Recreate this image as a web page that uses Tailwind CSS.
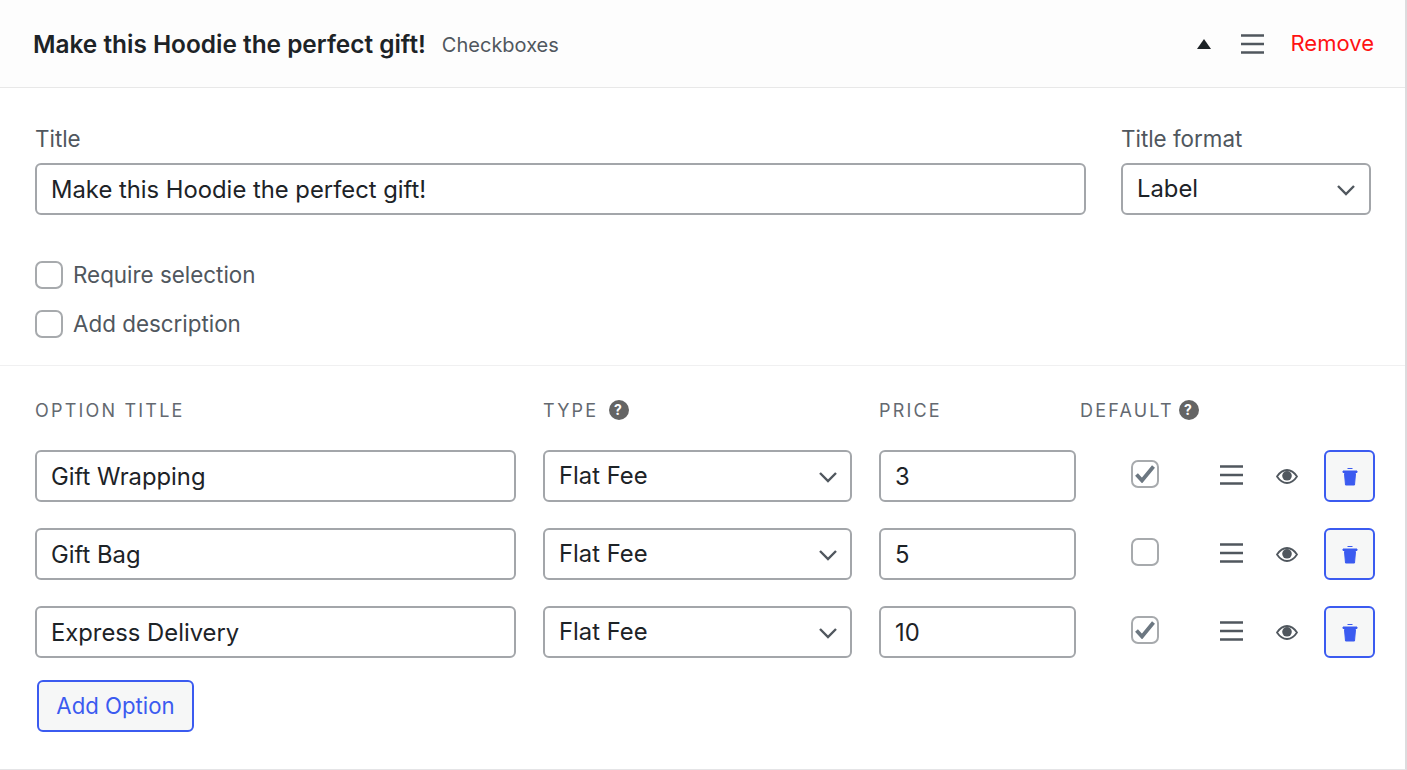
<!DOCTYPE html>
<html lang="en">
<head>
    <meta charset="UTF-8">
    <title>Checkboxes add-on</title>
    <script src="https://cdn.jsdelivr.net/npm/@tailwindcss/browser@4"></script>
</head>
<body class="bg-white font-['Inter',sans-serif] text-[#50575e] overflow-hidden">
    <div class="w-[1407px] h-[770px] border-r-2 border-r-[#dcdcde] border-b border-b-[#e4e4e6] overflow-hidden">

        <!-- header -->
        <div class="h-[88px] bg-[#fdfdfd] border-b border-[#e8e8e8] pl-[33px] pr-[31px] flex items-center">
            <span class="pt-[1px] text-[24.4px] font-semibold text-[#1d2327]">Make this Hoodie the perfect gift!</span>
            <span class="ml-[16px] pt-[3px] text-[20px] text-[#50575e]">Checkboxes</span>
            <svg class="ml-auto" width="16" height="12" viewBox="0 0 16 12"><path d="M8 1 15 11H1z" fill="#1d2327"/></svg>
            <svg class="ml-[29px]" width="24" height="20" viewBox="0 0 24 20"><path d="M0 1.500h23M0 10h23M0 18.500h23" stroke="#50575e" stroke-width="2.500"/></svg>
            <span class="ml-[26px] text-[22px] text-[#ff1212]">Remove</span>
        </div>

        <!-- title + format -->
        <div class="pl-[35px] pr-[34px] pt-[36px] flex gap-[35px]">
            <div class="w-[1051px]">
                <label class="block text-[22.4px] leading-[30px] text-[#50575e] mb-[9px]">Title</label>
                <input class="w-full h-[52px] px-[14px] bg-white border-2 border-[#a3a6aa] rounded-[6px] text-[23.8px] text-[#1d2327]" value="Make this Hoodie the perfect gift!">
            </div>
            <div class="w-[250px]">
                <label class="block text-[22.4px] leading-[30px] text-[#50575e] mb-[9px]">Title format</label>
                <div class="relative">
                    <select class="appearance-none w-full h-[52px] px-[14px] bg-white border-2 border-[#a3a6aa] rounded-[6px] text-[23.8px] text-[#1d2327]"><option>Label</option></select>
                    <svg class="absolute right-[15px] top-[21px]" width="20" height="12" viewBox="0 0 20 12"><path d="M2 2l8 8 8-8" fill="none" stroke="#50575e" stroke-width="2.400"/></svg>
                </div>
            </div>
        </div>

        <!-- settings -->
        <div class="pl-[35px] pt-[46px] pb-[28px] flex flex-col gap-[22px] border-b border-[#f0f0f1]">
            <label class="flex items-center h-[27px] gap-[10px] text-[22.4px] text-[#50575e]">
                <span class="w-[28px] h-[28px] border-2 border-[#a7aaad] rounded-[7px] bg-white"></span>Require selection
            </label>
            <label class="flex items-center h-[27px] gap-[10px] text-[22.4px] text-[#50575e]">
                <span class="w-[28px] h-[28px] border-2 border-[#a7aaad] rounded-[7px] bg-white"></span>Add description
            </label>
        </div>

        <!-- options -->
        <div class="pl-[35px] pt-[30px]">
            <div class="flex h-[28px] items-center text-[18px] tracking-[2.2px] text-[#646970]">
                <span class="w-[508px]">OPTION TITLE</span>
                <span class="w-[336px] flex items-center gap-[11px]">TYPE
                    <svg width="20" height="20" viewBox="0 0 20 20"><circle cx="10" cy="10" r="10" fill="#646464"/><text x="10" y="15" text-anchor="middle" font-size="14" font-weight="700" fill="#fff" font-family="Inter">?</text></svg>
                </span>
                <span class="w-[201px]">PRICE</span>
                <span class="flex items-center gap-[5px]">DEFAULT
                    <svg width="20" height="20" viewBox="0 0 20 20"><circle cx="10" cy="10" r="10" fill="#646464"/><text x="10" y="15" text-anchor="middle" font-size="14" font-weight="700" fill="#fff" font-family="Inter">?</text></svg>
                </span>
            </div>

            <div class="mt-[26px] flex flex-col gap-[26px]">
                <!-- row 1 -->
                <div class="flex items-center h-[52px]">
                    <input class="w-[481px] h-[52px] px-[14px] bg-white border-2 border-[#a3a6aa] rounded-[6px] text-[23.8px] text-[#1d2327]" value="Gift Wrapping">
                    <div class="relative ml-[27px] w-[309px]">
                        <select class="appearance-none w-full h-[52px] px-[14px] bg-white border-2 border-[#a3a6aa] rounded-[6px] text-[23.8px] text-[#1d2327]"><option>Flat Fee</option></select>
                        <svg class="absolute right-[14px] top-[21px]" width="20" height="12" viewBox="0 0 20 12"><path d="M2 2l8 8 8-8" fill="none" stroke="#50575e" stroke-width="2.400"/></svg>
                    </div>
                    <input class="ml-[27px] w-[197px] h-[52px] px-[14px] bg-white border-2 border-[#a3a6aa] rounded-[6px] text-[23.8px] text-[#1d2327]" value="3">
                    <span class="ml-[55px] mb-[5px] w-[28px] h-[28px] border-2 border-[#a7aaad] rounded-[7px] bg-white flex items-center justify-center">
                        <svg width="20" height="18" viewBox="0 0 20 18"><path d="M1.500 9.500l5.500 6L18.500 1.500" fill="none" stroke="#6c7781" stroke-width="3.800"/></svg>
                    </span>
                    <svg class="ml-[61px] mb-[3px]" width="24" height="20" viewBox="0 0 24 20"><path d="M0 1.500h23M0 10h23M0 18.500h23" stroke="#50575e" stroke-width="2.500"/></svg>
                    <svg class="ml-[32px]" width="22" height="15" viewBox="0 0 22 15"><path d="M1 7.500C4 3 7 1 11 1s7 2 10 6.500C18 12 15 14 11 14S4 12 1 7.500z" fill="none" stroke="#50575e" stroke-width="1.800"/><circle cx="11" cy="6.800" r="4.800" fill="#50575e"/></svg>
                    <button class="ml-[26px] w-[51px] h-[52px] flex items-center justify-center bg-[#f6f7f7] border-2 border-[#3b5bf0] rounded-[6px]">
                        <svg width="16" height="19" viewBox="0 0 16 19"><path d="M5.500 1.500h5M1 4h14v1.500H1zM2.500 6.500h11L12.500 18h-9z" fill="#3b5bf0" stroke="#3b5bf0" stroke-width="1"/></svg>
                    </button>
                </div>
                <!-- row 2 -->
                <div class="flex items-center h-[52px]">
                    <input class="w-[481px] h-[52px] px-[14px] bg-white border-2 border-[#a3a6aa] rounded-[6px] text-[23.8px] text-[#1d2327]" value="Gift Bag">
                    <div class="relative ml-[27px] w-[309px]">
                        <select class="appearance-none w-full h-[52px] px-[14px] bg-white border-2 border-[#a3a6aa] rounded-[6px] text-[23.8px] text-[#1d2327]"><option>Flat Fee</option></select>
                        <svg class="absolute right-[14px] top-[21px]" width="20" height="12" viewBox="0 0 20 12"><path d="M2 2l8 8 8-8" fill="none" stroke="#50575e" stroke-width="2.400"/></svg>
                    </div>
                    <input class="ml-[27px] w-[197px] h-[52px] px-[14px] bg-white border-2 border-[#a3a6aa] rounded-[6px] text-[23.8px] text-[#1d2327]" value="5">
                    <span class="ml-[55px] mb-[5px] w-[28px] h-[28px] border-2 border-[#a7aaad] rounded-[7px] bg-white"></span>
                    <svg class="ml-[61px] mb-[3px]" width="24" height="20" viewBox="0 0 24 20"><path d="M0 1.500h23M0 10h23M0 18.500h23" stroke="#50575e" stroke-width="2.500"/></svg>
                    <svg class="ml-[32px]" width="22" height="15" viewBox="0 0 22 15"><path d="M1 7.500C4 3 7 1 11 1s7 2 10 6.500C18 12 15 14 11 14S4 12 1 7.500z" fill="none" stroke="#50575e" stroke-width="1.800"/><circle cx="11" cy="6.800" r="4.800" fill="#50575e"/></svg>
                    <button class="ml-[26px] w-[51px] h-[52px] flex items-center justify-center bg-[#f6f7f7] border-2 border-[#3b5bf0] rounded-[6px]">
                        <svg width="16" height="19" viewBox="0 0 16 19"><path d="M5.500 1.500h5M1 4h14v1.500H1zM2.500 6.500h11L12.500 18h-9z" fill="#3b5bf0" stroke="#3b5bf0" stroke-width="1"/></svg>
                    </button>
                </div>
                <!-- row 3 -->
                <div class="flex items-center h-[52px]">
                    <input class="w-[481px] h-[52px] px-[14px] bg-white border-2 border-[#a3a6aa] rounded-[6px] text-[23.8px] text-[#1d2327]" value="Express Delivery">
                    <div class="relative ml-[27px] w-[309px]">
                        <select class="appearance-none w-full h-[52px] px-[14px] bg-white border-2 border-[#a3a6aa] rounded-[6px] text-[23.8px] text-[#1d2327]"><option>Flat Fee</option></select>
                        <svg class="absolute right-[14px] top-[21px]" width="20" height="12" viewBox="0 0 20 12"><path d="M2 2l8 8 8-8" fill="none" stroke="#50575e" stroke-width="2.400"/></svg>
                    </div>
                    <input class="ml-[27px] w-[197px] h-[52px] px-[14px] bg-white border-2 border-[#a3a6aa] rounded-[6px] text-[23.8px] text-[#1d2327]" value="10">
                    <span class="ml-[55px] mb-[5px] w-[28px] h-[28px] border-2 border-[#a7aaad] rounded-[7px] bg-white flex items-center justify-center">
                        <svg width="20" height="18" viewBox="0 0 20 18"><path d="M1.500 9.500l5.500 6L18.500 1.500" fill="none" stroke="#6c7781" stroke-width="3.800"/></svg>
                    </span>
                    <svg class="ml-[61px] mb-[3px]" width="24" height="20" viewBox="0 0 24 20"><path d="M0 1.500h23M0 10h23M0 18.500h23" stroke="#50575e" stroke-width="2.500"/></svg>
                    <svg class="ml-[32px]" width="22" height="15" viewBox="0 0 22 15"><path d="M1 7.500C4 3 7 1 11 1s7 2 10 6.500C18 12 15 14 11 14S4 12 1 7.500z" fill="none" stroke="#50575e" stroke-width="1.800"/><circle cx="11" cy="6.800" r="4.800" fill="#50575e"/></svg>
                    <button class="ml-[26px] w-[51px] h-[52px] flex items-center justify-center bg-[#f6f7f7] border-2 border-[#3b5bf0] rounded-[6px]">
                        <svg width="16" height="19" viewBox="0 0 16 19"><path d="M5.500 1.500h5M1 4h14v1.500H1zM2.500 6.500h11L12.500 18h-9z" fill="#3b5bf0" stroke="#3b5bf0" stroke-width="1"/></svg>
                    </button>
                </div>
            </div>

            <button class="mt-[22px] ml-[2px] w-[157px] h-[52px] bg-[#f6f7f7] border-2 border-[#3b5bf0] rounded-[6px] text-[22.2px] text-[#3b5bf0]">Add Option</button>
        </div>
    </div>
</body>
</html>
